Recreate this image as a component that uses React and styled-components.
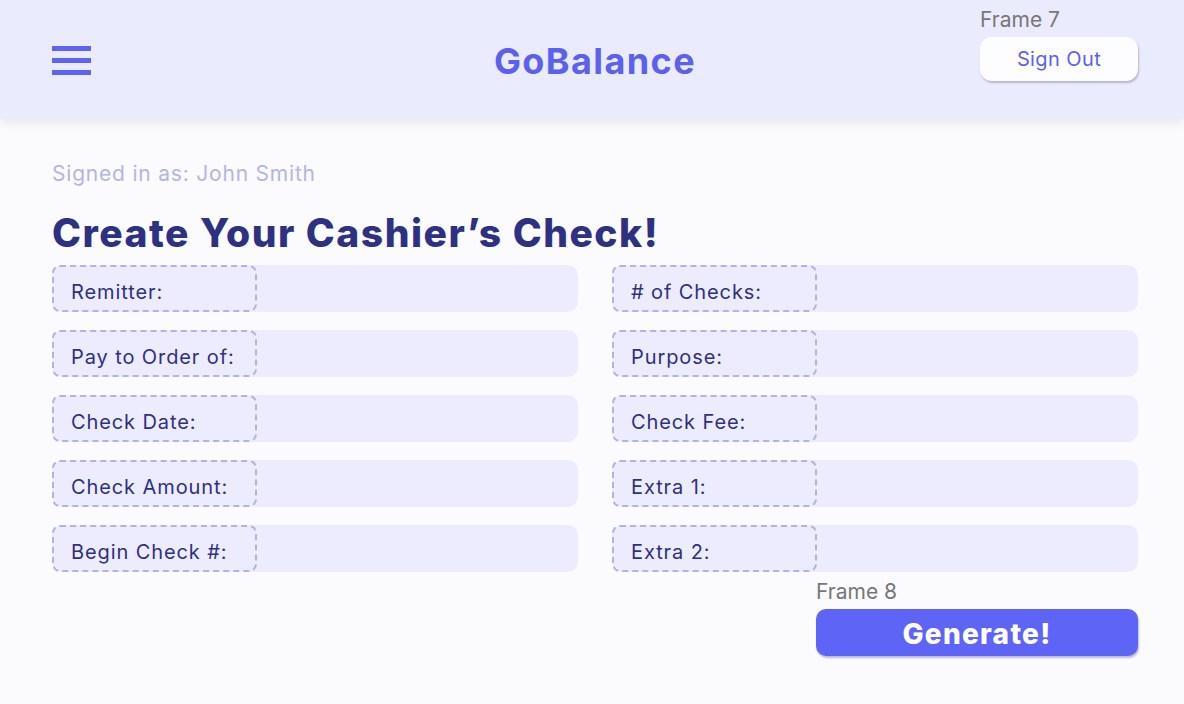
import React from 'react';
import styled, { createGlobalStyle } from 'styled-components';

const Global = createGlobalStyle`
  html, body {
    margin: 0;
    padding: 0;
    background: #fbfbfe;
    font-family: Inter, "Noto Sans", sans-serif;
  }
`;

const Page = styled.div`
  width: 1184px;
  height: 704px;
  overflow: hidden;
  background: #fbfbfe;
`;

const Header = styled.header`
  height: 119px;
  background: #ebebfe;
  box-shadow: 0 3px 10px rgba(0, 0, 0, 0.09);
  display: grid;
  grid-template-columns: 1fr auto 1fr;
  align-items: center;
  padding: 0 46px 0 52px;
  box-sizing: border-box;
  position: relative;
`;

const Burger = styled.div`
  width: 39px;
  display: flex;
  flex-direction: column;
  gap: 7px;
  margin-top: 2px;
  span {
    display: block;
    height: 5px;
    background: #5e63f4;
  }
`;

const Brand = styled.div`
  font-size: 36px;
  font-weight: 700;
  color: #5b61ee;
  letter-spacing: 1.4px;
  margin-top: 3px;
`;

const Right = styled.div`
  justify-self: end;
  display: flex;
  flex-direction: column;
  align-self: start;
  padding-top: 8px;
`;

const FrameLabel = styled.div`
  font-size: 21px;
  color: #777;
  line-height: 24px;
  margin-bottom: 5px;
`;

const SignOut = styled.button`
  width: 158px;
  height: 44px;
  border: none;
  border-radius: 12px;
  background: #fdfdff;
  box-shadow: 1px 2px 2px rgba(60, 60, 110, 0.3);
  color: #5b61ee;
  font-family: inherit;
  font-size: 20px;
  letter-spacing: 0.4px;
  cursor: pointer;
`;

const Main = styled.main`
  padding: 42px 46px 0 52px;
`;

const Signed = styled.div`
  font-size: 21px;
  color: #b4b5e4;
  line-height: 26px;
  letter-spacing: 0.8px;
`;

const Title = styled.h1`
  margin: 22px 0 0;
  font-size: 39px;
  font-weight: 800;
  color: #2e3182;
  line-height: 48px;
  letter-spacing: 1.5px;
`;

const Grid = styled.div`
  margin-top: 8px;
  display: grid;
  grid-template-columns: 1fr 1fr;
  column-gap: 34px;
  row-gap: 18px;
`;

const Field = styled.div`
  height: 47px;
  background: #ececfe;
  border-radius: 10px;
  display: flex;
`;

const Label = styled.div`
  width: 205px;
  box-sizing: border-box;
  border: 2px dashed #b3b3de;
  border-radius: 8px;
  display: flex;
  align-items: center;
  padding: 6px 0 0 17px;
  font-size: 20px;
  letter-spacing: 0.9px;
  color: #2e3182;
`;

const Footer = styled.div`
  display: flex;
  justify-content: flex-end;
  margin-top: 8px;
`;

const FooterCol = styled.div`
  display: flex;
  flex-direction: column;
`;

const Generate = styled.button`
  width: 322px;
  height: 47px;
  border: none;
  border-radius: 10px;
  background: #5e64f5;
  box-shadow: 1px 2px 2px rgba(40, 40, 90, 0.3);
  color: #fff;
  font-family: inherit;
  font-size: 28px;
  font-weight: 800;
  letter-spacing: 1.3px;
  padding-top: 3px;
  cursor: pointer;
`;

const left = ['Remitter:', 'Pay to Order of:', 'Check Date:', 'Check Amount:', 'Begin Check #:'];
const right = ['# of Checks:', 'Purpose:', 'Check Fee:', 'Extra 1:', 'Extra 2:'];

export default function App() {
  const fields = [];
  left.forEach((l, i) => {
    fields.push(l, right[i]);
  });
  return (
    <Page>
      <Global />
      <Header>
        <Burger>
          <span />
          <span />
          <span />
        </Burger>
        <Brand>GoBalance</Brand>
        <Right>
          <FrameLabel>Frame 7</FrameLabel>
          <SignOut>Sign Out</SignOut>
        </Right>
      </Header>
      <Main>
        <Signed>Signed in as: John Smith</Signed>
        <Title>Create Your Cashier’s Check!</Title>
        <Grid>
          {fields.map((f) => (
            <Field key={f}>
              <Label>{f}</Label>
            </Field>
          ))}
        </Grid>
        <Footer>
          <FooterCol>
            <FrameLabel>Frame 8</FrameLabel>
            <Generate>Generate!</Generate>
          </FooterCol>
        </Footer>
      </Main>
    </Page>
  );
}
